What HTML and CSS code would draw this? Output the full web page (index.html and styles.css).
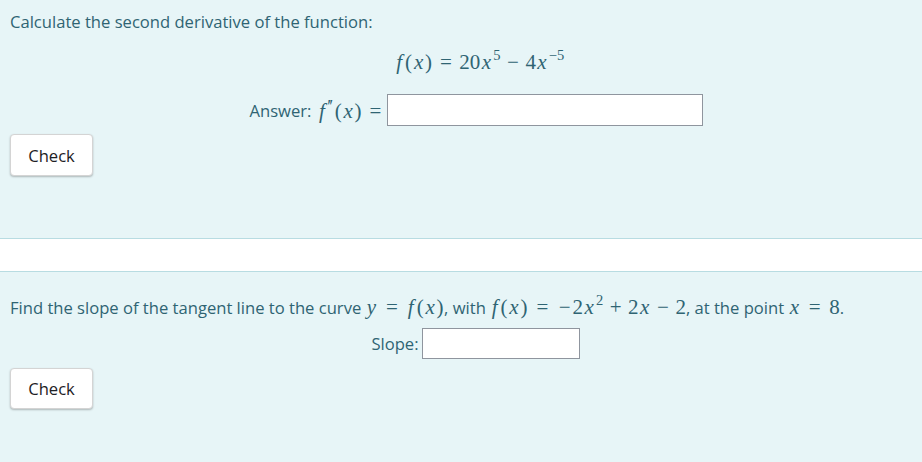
FILE: index.html
```html
<!DOCTYPE html>
<html>
<head>
<meta charset="utf-8">
<link rel="stylesheet" href="styles.css">
</head>
<body>
<div class="que que-first">
  <div class="formulation">
    <p class="qtext">Calculate the second derivative of the function:</p>
    <div class="eq center"><span class="math"><span class="mi mf">f</span><span class="mo">(</span><span class="mi">x</span><span class="mo">)</span><span class="rel">=</span><span class="mn">20</span><span class="mi">x</span><sup class="sup">5</sup><span class="bin">−</span><span class="mn">4</span><span class="mi">x</span><sup class="sup">−5</sup></span></div>
    <div class="answer center"><span class="label">Answer:</span><span class="math"><span class="mi mf">f</span><span class="prime">′′</span><span class="mo">(</span><span class="mi">x</span><span class="mo">)</span><span class="rel">=</span></span><input class="input-wide" type="text"></div>
    <button class="btn-check" type="button">Check</button>
  </div>
</div>
<div class="que que-second">
  <div class="formulation">
    <p class="qtext">Find the slope of the tangent line to the curve <span class="math"><span class="mi">y</span><span class="rel">=</span><span class="mi mf">f</span><span class="mo">(</span><span class="mi">x</span><span class="mo">)</span></span>, with <span class="math"><span class="mi mf">f</span><span class="mo">(</span><span class="mi">x</span><span class="mo">)</span><span class="rel">=</span><span class="mo un">−</span><span class="mn">2</span><span class="mi">x</span><sup class="sup">2</sup><span class="bin">+</span><span class="mn">2</span><span class="mi">x</span><span class="bin">−</span><span class="mn">2</span></span>, at the point <span class="math"><span class="mi">x</span><span class="rel">=</span><span class="mn">8</span></span>.</p>
    <div class="answer slope center"><span class="label">Slope:</span><input class="input-slope" type="text"></div>
    <button class="btn-check btn-second" type="button">Check</button>
  </div>
</div>
</body>
</html>
```
FILE: styles.css
```css
html, body {
  margin: 0;
  padding: 0;
  background: #ffffff;
}
body {
  width: 922px;
  height: 462px;
  overflow: hidden;
  font-family: "Open Sans", "Liberation Sans", sans-serif;
  font-size: 16.6px;
  color: #2f6473;
}
.que {
  background: #e7f5f7;
  border-color: #b8dce2;
  border-style: solid;
  border-width: 0;
}
.que-first {
  border-bottom-width: 1px;
  height: 238px;
}
.que-second {
  margin-top: 32px;
  border-top-width: 1px;
  height: 200px;
}
.formulation {
  display: flex;
  flex-direction: column;
  align-items: flex-start;
  padding: 10px 0 0 10px;
}
.que-second .formulation {
  padding-top: 23px;
}
.qtext {
  margin: 0;
  line-height: 24px;
  white-space: nowrap;
}
.center {
  align-self: stretch;
  display: flex;
  justify-content: center;
  align-items: center;
  white-space: nowrap;
}
.eq {
  margin-top: 13px;
  height: 30px;
  padding-left: 27px;
}
.math {
  font-family: "Liberation Serif", "DejaVu Serif", serif;
  font-size: 21px;
  color: #2f6473;
}
.mi {
  font-style: italic;
  padding: 0 1.3px;
}
.mf {
  padding: 0 2.5px 0 1.5px;
}
.mo {
  padding: 0 0.5px;
}
.un {
  padding: 0 2px;
}
.rel {
  padding: 0 7.5px;
}
.qtext .rel {
  padding: 0 8.5px;
}
.bin {
  padding: 0 6.5px;
}
.sup {
  font-size: 14.5px;
  vertical-align: 9px;
  line-height: 0;
  margin-left: 1px;
}
.prime {
  font-style: normal;
  font-size: 18px;
  vertical-align: 5px;
  letter-spacing: -2px;
  margin-right: 3px;
}
.answer {
  margin-top: 17px;
  height: 32px;
  padding-left: 21px;
}
.label {
  margin-right: 6px;
}
.answer .rel {
  padding-right: 6px;
}
.input-wide {
  width: 316px;
  height: 32px;
  box-sizing: border-box;
  border: 1px solid #8f959e;
  background: #fff;
  margin: 0;
  padding: 0;
}
.slope {
  margin-top: 8px;
  height: 31px;
  padding-left: 19px;
}
.slope .label {
  margin-right: 3px;
}
.input-slope {
  width: 158px;
  height: 31px;
  box-sizing: border-box;
  border: 1px solid #8f959e;
  background: #fff;
  margin: 0;
  padding: 0;
}
.btn-check {
  margin-top: 8px;
  width: 83px;
  height: 42px;
  box-sizing: border-box;
  background: #ffffff;
  border: 1px solid #d4d4d4;
  border-radius: 4px;
  box-shadow: 0 1px 2px rgba(0, 0, 0, 0.25);
  font-family: "Open Sans", "Liberation Sans", sans-serif;
  font-size: 16.6px;
  color: #1d2125;
  padding: 0;
}
.btn-second {
  margin-top: 9px;
  height: 41px;
}
```
